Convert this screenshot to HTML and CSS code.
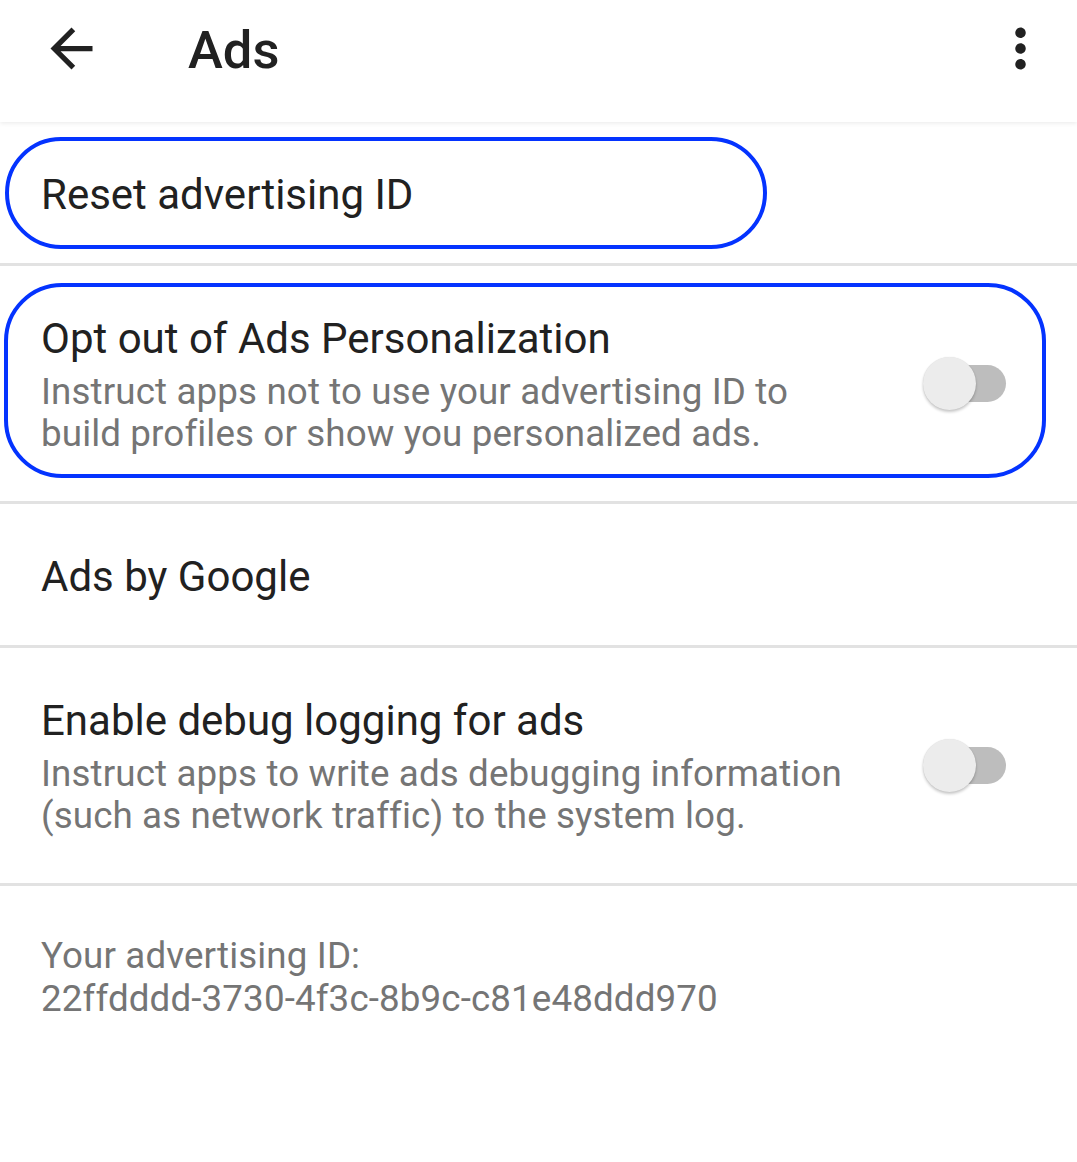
FILE: index.html
```html
<!DOCTYPE html>
<html lang="en">
<head>
<meta charset="utf-8">
<title>Ads</title>
<link rel="stylesheet" href="styles.css">
</head>
<body>
<header class="toolbar">
  <svg class="icon back" viewBox="0 0 24 24" aria-label="Back"><path d="M20 11H7.83l5.59-5.59L12 4l-8 8 8 8 1.41-1.41L7.83 13H20v-2z"/></svg>
  <h1 class="title">Ads</h1>
  <svg class="icon menu" viewBox="0 0 24 24" aria-label="More options"><path d="M12 8c1.1 0 2-.9 2-2s-.9-2-2-2-2 .9-2 2 .9 2 2 2zm0 2c-1.1 0-2 .9-2 2s.9 2 2 2 2-.9 2-2-.9-2-2-2zm0 6c-1.1 0-2 .9-2 2s.9 2 2 2 2-.9 2-2-.9-2-2-2z"/></svg>
</header>
<main class="list">
  <div class="pref single">
    <div class="hl hl-reset"></div>
    <div class="pref-title">Reset advertising ID</div>
  </div>
  <div class="divider"></div>
  <div class="pref double">
    <div class="hl hl-opt"></div>
    <div class="text">
      <div class="pref-title tall">Opt out of Ads Personalization</div>
      <div class="summary">Instruct apps not to use your advertising ID to build profiles or show you personalized ads.</div>
    </div>
    <div class="switch"><span class="track"></span><span class="thumb"></span></div>
  </div>
  <div class="divider"></div>
  <div class="pref single">
    <div class="pref-title">Ads by Google</div>
  </div>
  <div class="divider"></div>
  <div class="pref double">
    <div class="text">
      <div class="pref-title tall">Enable debug logging for ads</div>
      <div class="summary">Instruct apps to write ads debugging information (such as network traffic) to the system log.</div>
    </div>
    <div class="switch"><span class="track"></span><span class="thumb"></span></div>
  </div>
  <div class="divider"></div>
  <div class="footer">Your advertising ID:<br>22ffdddd-3730-4f3c-8b9c-c81e48ddd970</div>
</main>
</body>
</html>
```
FILE: styles.css
```css
html, body {
  margin: 0;
  padding: 0;
  background: #ffffff;
}
body {
  font-family: Roboto, "Noto Sans", "Liberation Sans", sans-serif;
  color: #212121;
  width: 1077px;
  height: 1162px;
  overflow: hidden;
}
.toolbar {
  position: relative;
  z-index: 2;
  height: 122px;
  box-sizing: border-box;
  display: flex;
  align-items: flex-start;
  padding-top: 17px;
  background: #ffffff;
  box-shadow: 0 1px 5px rgba(0, 0, 0, 0.09);
}
.icon {
  width: 63px;
  height: 63px;
  fill: #212121;
  flex: none;
}
.back {
  margin-left: 40px;
}
.title {
  margin: 2px 0 0 85px;
  font-size: 52.5px;
  line-height: 63px;
  font-weight: 500;
  color: #212121;
}
.menu {
  margin-left: auto;
  margin-right: 25px;
}
.list {
  position: relative;
  z-index: 1;
}
.pref {
  position: relative;
  display: flex;
  align-items: center;
  padding-left: 41px;
  padding-right: 71px;
}
.pref.single {
  height: 141px;
  box-sizing: border-box;
  padding-top: 48px;
  padding-bottom: 44px;
  align-items: flex-start;
}
.pref.double {
  height: 235px;
  box-sizing: border-box;
}
.text {
  flex: 1;
  margin-right: 63px;
}
.pref-title {
  font-size: 42px;
  line-height: 49px;
  color: #212121;
}
.pref-title.tall {
  line-height: 54px;
}
.summary {
  padding-top: 5px;
  font-size: 36.75px;
  line-height: 42.5px;
  letter-spacing: 0.12px;
  color: #757575;
}
.divider {
  height: 3px;
  background: #e2e2e2;
}
.switch {
  position: relative;
  width: 83px;
  height: 53px;
  flex: none;
}
.track {
  position: absolute;
  right: 0;
  top: 8px;
  width: 74px;
  height: 37px;
  border-radius: 18.5px;
  background: #bdbdbd;
}
.thumb {
  position: absolute;
  left: 0;
  top: 0;
  width: 53px;
  height: 53px;
  border-radius: 50%;
  background: #ececec;
  box-shadow: 0 2px 3px rgba(0, 0, 0, 0.22), 0 0 1px rgba(0, 0, 0, 0.12);
}
.hl {
  position: absolute;
  box-sizing: border-box;
  border: 4px solid #0433ff;
  pointer-events: none;
}
.hl-reset {
  left: 5px;
  top: 15px;
  width: 762px;
  height: 112px;
  border-radius: 56px;
}
.hl-opt {
  left: 4px;
  top: 17px;
  width: 1042px;
  height: 195px;
  border-radius: 58px;
}
.footer {
  padding: 49px 0 0 41px;
  font-size: 36.75px;
  line-height: 42.5px;
  letter-spacing: 0.12px;
  color: #757575;
}
```
